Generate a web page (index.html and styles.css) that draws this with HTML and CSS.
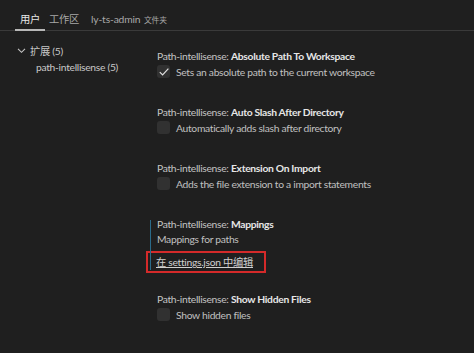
FILE: index.html
```html
<!DOCTYPE html>
<html>
<head>
<meta charset="utf-8">
<link rel="stylesheet" href="styles.css">
</head>
<body>
<div class="tabs">
  <div class="tab active">用户</div>
  <div class="tab">工作区</div>
  <div class="tab folder">ly-ts-admin <span class="small">文件夹</span></div>
</div>
<div class="main">
  <div class="side">
    <div class="group"><svg class="chev" width="9" height="9" viewBox="0 0 9 9"><path d="M1 2.8 L4.5 6.3 L8 2.8" fill="none" stroke="#c5c5c5" stroke-width="1.1"/></svg>扩展 (5)</div>
    <div class="item">path-intellisense (5)</div>
  </div>
  <div class="content">
    <div class="setting">
      <div class="title"><span class="cat">Path-intellisense: </span><b>Absolute Path To Workspace</b></div>
      <div class="row"><span class="box"><svg width="12" height="12" viewBox="0 0 12 12"><path d="M1.8 6.2 L4.6 9 L10.4 2.6" fill="none" stroke="#e0e0e0" stroke-width="1.2"/></svg></span><span class="desc">Sets an absolute path to the current workspace</span></div>
    </div>
    <div class="setting">
      <div class="title"><span class="cat">Path-intellisense: </span><b>Auto Slash After Directory</b></div>
      <div class="row"><span class="box"></span><span class="desc">Automatically adds slash after directory</span></div>
    </div>
    <div class="setting">
      <div class="title"><span class="cat">Path-intellisense: </span><b>Extension On Import</b></div>
      <div class="row"><span class="box"></span><span class="desc">Adds the file extension to a import statements</span></div>
    </div>
    <div class="setting focused">
      <div class="title"><span class="cat">Path-intellisense: </span><b>Mappings</b></div>
      <div class="plain">Mappings for paths</div>
      <div class="linkrow"><span class="hl"><a class="link">在 settings.json 中编辑</a></span></div>
    </div>
    <div class="setting">
      <div class="title"><span class="cat">Path-intellisense: </span><b>Show Hidden Files</b></div>
      <div class="row"><span class="box"></span><span class="desc">Show hidden files</span></div>
    </div>
  </div>
</div>
</body>
</html>
```
FILE: styles.css
```css
html, body {
  margin: 0;
  padding: 0;
  background: #1f1f1f;
  width: 474px;
  height: 353px;
  overflow: hidden;
  font-family: "Lato", "Noto Sans CJK SC", sans-serif;
  font-size: 10.3px;
  letter-spacing: -0.3px;
  color: #cccccc;
}
.tabs {
  display: flex;
  align-items: flex-end;
  height: 31px;
  padding-left: 15px;
  border-bottom: 1px solid #3a3a3a;
  box-sizing: border-box;
}
.tab {
  color: #a8a8a8;
  font-size: 10.3px;
  padding: 0 5px;
  height: 30px;
  line-height: 38px;
  box-sizing: border-box;
  margin-right: -1px;
}
.tab.folder { padding-left: 8px; letter-spacing: -0.15px; }
.tab.active {
  color: #e8e8e8;
  border-bottom: 2px solid #b8b8b8;
  height: 31px;
  margin-bottom: -1px;
}
.small { font-size: 7.8px; margin-left: 1px; }
.main {
  display: flex;
}
.side {
  width: 150px;
  padding-top: 10px;
}
.group {
  display: flex;
  align-items: center;
  padding-left: 17px;
  height: 18px;
  color: #c8c8c8;
}
.chev { margin-right: 4px; }
.item {
  padding-left: 36px;
  height: 17px;
  line-height: 17px;
  color: #c8c8c8;
}
.content {
  padding-top: 18px;
  flex: 1;
}
.setting {
  position: relative;
  padding: 0 0 26px 7px;
}
.setting.focused {
  padding-bottom: 19px;
}
.setting.focused::before {
  content: "";
  position: absolute;
  left: 0;
  top: 3px;
  width: 1px;
  height: 50px;
  background: #2a6b8a;
}
.title {
  height: 15px;
  line-height: 15px;
  color: #c4c4c4;
}
.title b { color: #e6e6e6; font-weight: 700; }
.row {
  display: flex;
  align-items: center;
  height: 15px;
}
.box {
  width: 13px;
  height: 13px;
  background: #313131;
  border-radius: 3px;
  margin-right: 6px;
  display: flex;
  align-items: center;
  justify-content: center;
}
.desc { color: #c0c0c0; }
.plain { height: 15px; line-height: 15px; color: #c0c0c0; }
.linkrow { height: 22px; margin-top: 4px; }
.hl {
  display: inline-block;
  margin-left: -11px;
  padding: 0 11px 0 8px;
  border: 2px solid #d42a2a;
  height: 18px;
  line-height: 18px;
}
.link {
  color: #d0d0d0;
  text-decoration: underline;
}
```
